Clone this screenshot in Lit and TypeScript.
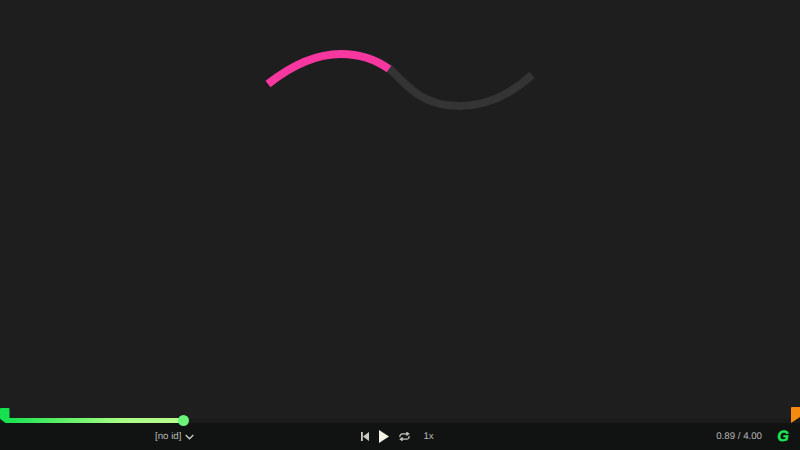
import { LitElement, html, css, svg } from "lit";
import { customElement } from "lit/decorators.js";

@customElement("app-root")
export class AppRoot extends LitElement {
  static styles = css`
    :host { display: block; width: 800px; height: 450px; font-family: "Liberation Sans", Arial, sans-serif; }
    .page { width: 800px; height: 450px; display: flex; flex-direction: column; background: #1e1e1e; overflow: hidden; }
    .stage { flex: 1; min-height: 0; }
    .stage svg { display: block; width: 800px; height: 418px; }
    .track { position: relative; height: 5px; background: #1b1b1b; }
    .progress { position: absolute; left: 6px; top: 0; width: 178px; height: 5px; background: linear-gradient(90deg, #16e24f 0%, #a9ff85 65%, #b8ff8f 100%); }
    .thumb { position: absolute; left: 178px; top: -3px; width: 11px; height: 11px; border-radius: 50%; background: #6bf27a; }
    .marker { position: absolute; display: block; }
    .marker.in { left: 0; top: -10px; }
    .marker.out { right: 0; top: -11px; }
    .bar { height: 27px; background: #111313; display: grid; grid-template-columns: 1fr auto 1fr; align-items: center; color: #b6b6b6; font-size: 9.7px; text-rendering: geometricPrecision; }
    .left { display: flex; align-items: center; gap: 4px; padding-left: 155px; }
    .mid { display: flex; align-items: center; padding-right: 5px; }
    .mid svg { display: block; }
    .mid .skip { margin-right: 10px; }
    .mid .play { margin-right: 10px; }
    .mid .rep { margin-right: 13px; }
    .right { display: flex; align-items: center; justify-content: flex-end; padding-right: 11px; }
    .time { margin-right: 15px; }
    .logo { font-size: 15px; font-weight: 700; font-style: italic; color: #1ee553; width: 12px; text-align: center; line-height: 14px; -webkit-text-stroke: 0.4px #1ee553; }
  `;

  render() {
    return html`<div class="page">
      <div class="stage">
        <svg viewBox="0 0 800 418" fill="none">
          ${svg`<path d="M388 67C410 90 425 106 460 106C488 106 512 93 532 75" stroke="#343434" stroke-width="8"/>
          <path d="M268 84C292 65 316 54 341 54C360 54 375 59 389 69" stroke="#f637a0" stroke-width="8"/>`}
        </svg>
      </div>
      <div class="track">
        <div class="progress"></div>
        <svg class="marker in" width="10" height="15" viewBox="0 0 10 15"><path d="M1 0H8.5a1 1 0 0 1 1 1V10H6V15H5.5L1 11.5Q0 11 0 10V1a1 1 0 0 1 1-1Z" fill="#16e24f"/></svg>
        <svg class="marker out" width="9" height="16" viewBox="0 0 9 16"><path d="M1 0H9V10L0 16V1a1 1 0 0 1 1-1Z" fill="#f7890f"/></svg>
        <div class="thumb"></div>
      </div>
      <div class="bar">
        <div class="left">
          <span>[no id]</span>
          <svg width="9" height="6" viewBox="0 0 9 6" fill="none"><path d="M.7 1 4.5 4.8 8.3 1" stroke="#cccccc" stroke-width="1.3"/></svg>
        </div>
        <div class="mid">
          <svg class="skip" width="8" height="9" viewBox="0 0 8 9"><path d="M0 0H1.8V9H0ZM8 0V9L2 4.5Z" fill="#c9cbc4"/></svg>
          <svg class="play" width="10" height="13" viewBox="0 0 10 13"><path d="M0 0 10 6.5 0 13Z" fill="#f3f3e6"/></svg>
          <svg class="rep" width="11" height="9" viewBox="0 0 11 9" fill="none"><path d="M1 5C.6 3 2 1.8 3.5 1.8H9M7.4.3 9.6 1.8 7.4 3.4M10 4C10.4 6 9 7.2 7.5 7.2H2M3.6 5.6 1.4 7.2 3.6 8.7" stroke="#c4c6bf" stroke-width="1.3"/></svg>
          <span>1x</span>
        </div>
        <div class="right">
          <span class="time">0.89 / 4.00</span>
          <span class="logo">G</span>
        </div>
      </div>
    </div>`;
  }
}
